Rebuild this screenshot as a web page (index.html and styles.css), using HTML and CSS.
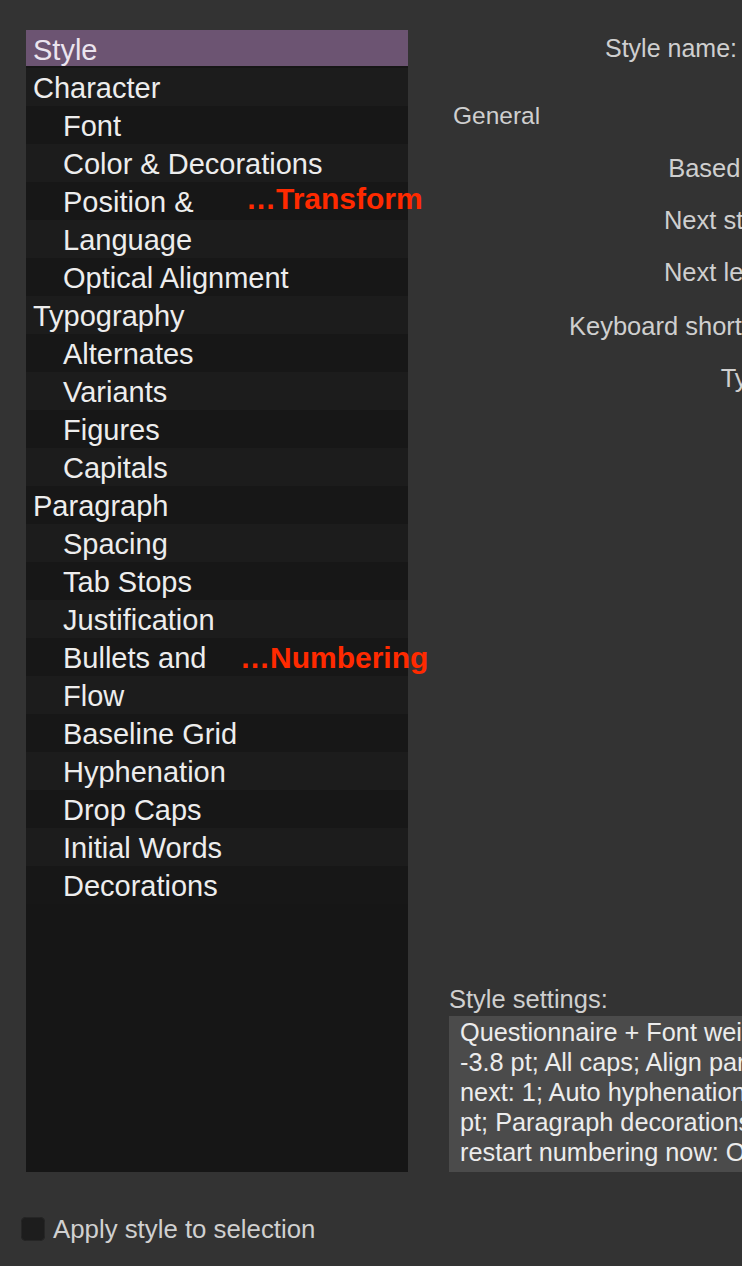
FILE: index.html
```html
<!DOCTYPE html>
<html lang="en">
<head>
<meta charset="utf-8">
<title>Paragraph Style</title>
<link rel="stylesheet" href="styles.css">
</head>
<body>
<div class="window">
  <div class="main">
    <div class="panel">
      <ul class="tree">
        <li class="row top selected">Style</li>
        <li class="row top">Character</li>
        <li class="row sub">Font</li>
        <li class="row sub">Color &amp; Decorations</li>
        <li class="row sub">Position &amp;</li>
        <li class="row sub">Language</li>
        <li class="row sub">Optical Alignment</li>
        <li class="row top">Typography</li>
        <li class="row sub">Alternates</li>
        <li class="row sub">Variants</li>
        <li class="row sub">Figures</li>
        <li class="row sub">Capitals</li>
        <li class="row top">Paragraph</li>
        <li class="row sub">Spacing</li>
        <li class="row sub">Tab Stops</li>
        <li class="row sub">Justification</li>
        <li class="row sub">Bullets and</li>
        <li class="row sub">Flow</li>
        <li class="row sub">Baseline Grid</li>
        <li class="row sub">Hyphenation</li>
        <li class="row sub">Drop Caps</li>
        <li class="row sub">Initial Words</li>
        <li class="row sub">Decorations</li>
      </ul>
      <span class="note note-transform">…Transform</span>
      <span class="note note-numbering">…Numbering</span>
    </div>
    <div class="pane">
      <div class="name-row"><span class="name-label">Style name:</span></div>
      <div class="section-title">General</div>
      <div class="form">
        <div class="form-label">Based on:</div>
        <div class="form-label">Next style:</div>
        <div class="form-label">Next level:</div>
        <div class="form-label kb">Keyboard shortcut:</div>
        <div class="form-label">Type:</div>
      </div>
      <div class="settings">
        <div class="settings-title">Style settings:</div>
        <div class="settings-box">
          <div class="line">Questionnaire + Font weight: Bold; Font size: 24 pt;</div>
          <div class="line">-3.8 pt; All caps; Align paragraph to baseline grid;</div>
          <div class="line">next: 1; Auto hyphenation: Off; Space before: 12</div>
          <div class="line">pt; Paragraph decorations: Bottom rule;</div>
          <div class="line">restart numbering now: Off</div>
        </div>
      </div>
    </div>
  </div>
  <label class="apply">
    <span class="checkbox"></span>
    <span class="apply-text">Apply style to selection</span>
  </label>
</div>
</body>
</html>
```

FILE: styles.css
```css
html, body {
  margin: 0;
  padding: 0;
  overflow: hidden;
  background: #333333;
}

body {
  width: 742px;
  height: 1266px;
  font-family: "Liberation Sans", Arial, sans-serif;
}

.window {
  display: flex;
  flex-direction: column;
  width: 1200px;
}

.main {
  display: flex;
  padding: 30px 0 0 26px;
}

.panel {
  position: relative;
  width: 382px;
  height: 1142px;
  background: #161616;
  flex: none;
}

.tree {
  list-style: none;
  margin: 0;
  padding: 0;
}

.row {
  height: 38px;
  line-height: 40px;
  font-size: 29px;
  color: #ededed;
  white-space: nowrap;
  background: #171717;
  overflow: hidden;
}

.row:nth-child(even) {
  background: #1c1c1c;
}

.row.top {
  padding-left: 7px;
}

.row.sub {
  padding-left: 37px;
}

.row.selected {
  background: #6c5472;
  color: #ebe4ee;
  height: 36px;
  line-height: 40px;
  border-bottom: 2px solid #161616;
}

.note {
  position: absolute;
  font-size: 30px;
  font-weight: bold;
  color: #ff2a00;
  line-height: 38px;
  white-space: nowrap;
}

.note-transform {
  left: 220px;
  top: 150px;
}

.note-numbering {
  left: 214px;
  top: 609px;
}

.pane {
  display: flex;
  flex-direction: column;
  width: 760px;
  flex: none;
  color: #cfcfcf;
  font-size: 25.5px;
}

.name-row {
  display: flex;
  height: 36px;
  margin-top: 3px;
  line-height: 30px;
}

.name-label {
  width: 329px;
  text-align: right;
  font-size: 25px;
}

.section-title {
  margin-top: 32px;
  padding-left: 45px;
  line-height: 30px;
  font-size: 24.5px;
}

.form {
  display: flex;
  flex-direction: column;
  gap: 22px;
  margin-top: 22px;
}

.form-label {
  width: 375px;
  text-align: right;
  line-height: 30px;
}

.form-label.kb {
  margin-top: 2px;
}

.settings {
  margin-top: auto;
  padding-left: 41px;
  display: flex;
  flex-direction: column;
}

.settings-title {
  line-height: 30px;
  padding-bottom: 2px;
  font-size: 25.5px;
}

.settings-box {
  background: #4b4b4b;
  padding: 1px 0 5px 11px;
  width: 600px;
  color: #ececec;
  font-size: 25.3px;
}

.line {
  line-height: 30px;
  white-space: nowrap;
}

.apply {
  display: flex;
  align-items: center;
  gap: 8px;
  margin: 43px 0 0 21px;
}

.checkbox {
  width: 24px;
  height: 24px;
  border-radius: 5px;
  background: #1d1d1d;
  box-shadow: inset 0 0 0 1px #262626;
  flex: none;
}

.apply-text {
  font-size: 25.8px;
  color: #d0d0d0;
  line-height: 28px;
}
```
